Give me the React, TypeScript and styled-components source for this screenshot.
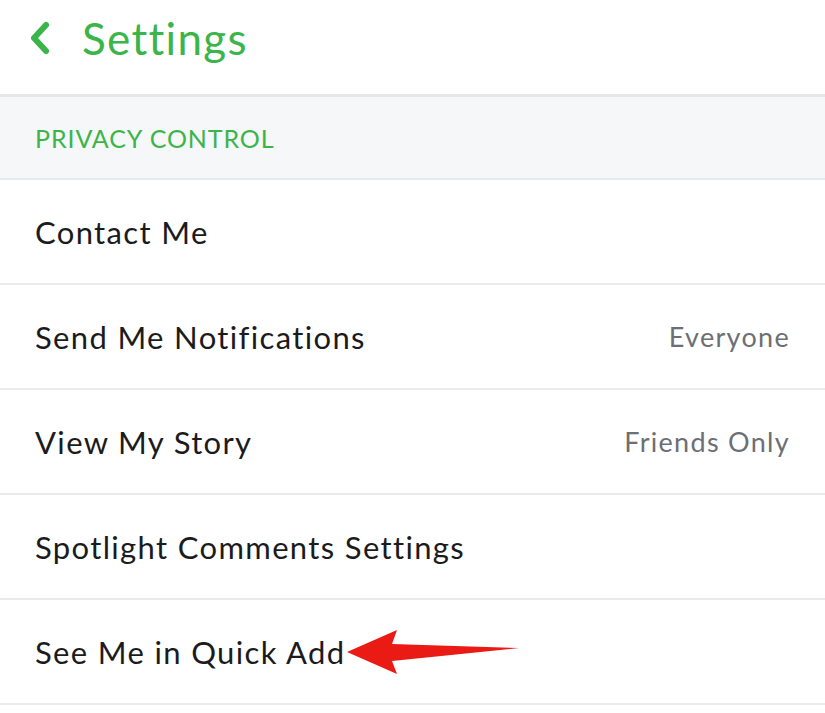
import React from "react"
import styled, { createGlobalStyle } from "styled-components"

const Global = createGlobalStyle`
  html, body { margin: 0; padding: 0; background: #fff; }
  body { font-family: Lato, "Noto Sans", sans-serif; }
`

const rows = [
  { label: "Contact Me", value: "" },
  { label: "Send Me Notifications", value: "Everyone" },
  { label: "View My Story", value: "Friends Only" },
  { label: "Spotlight Comments Settings", value: "" },
  { label: "See Me in Quick Add", value: "", arrow: true },
]

const Arrow = () => (
  <svg width="172" height="48" viewBox="0 0 172 48">
    <path d="M0 24 L50 2 L45 16 L172 20 L45 33 L50 46 Z" fill="#ea1a14" />
  </svg>
)

export default function App() {
  return (
    <S.Page>
      <Global />
      <S.Header>
        <S.Back viewBox="0 0 26 36" width="26" height="36">
          <path d="M19 5 L7 18 L19 31" fill="none" stroke="#3bb54a" strokeWidth="6" strokeLinecap="round" strokeLinejoin="round" />
        </S.Back>
        <S.Title>Settings</S.Title>
      </S.Header>
      <S.Section>PRIVACY CONTROL</S.Section>
      {rows.map((r) => (
        <S.Row key={r.label}>
          <S.Label>
            {r.label}
            {r.arrow && <S.ArrowWrap><Arrow /></S.ArrowWrap>}
          </S.Label>
          {r.value && <S.Value>{r.value}</S.Value>}
        </S.Row>
      ))}
    </S.Page>
  )
}

const S = {
  Page: styled.div`
    width: 825px;
    height: 713px;
    overflow: hidden;
    background: #fff;
  `,
  Header: styled.div`
    height: 97px;
    display: flex;
    align-items: center;
    padding-left: 27px;
    gap: 29px;
    border-bottom: 3px solid #e6e7e9;
    box-sizing: border-box;
    padding-bottom: 18px;
  `,
  Back: styled.svg`
    display: block;
  `,
  Title: styled.div`
    color: #3bb54a;
    font-size: 44px;
    letter-spacing: 1.3px;
  `,
  Section: styled.div`
    height: 83px;
    box-sizing: border-box;
    background: #f6f7f9;
    border-bottom: 2px solid #e8e9eb;
    color: #3bb54a;
    font-size: 25px;
    display: flex;
    align-items: center;
    padding-left: 35px;
    letter-spacing: 0.9px;
  `,
  Row: styled.div`
    height: 105px;
    box-sizing: border-box;
    border-bottom: 2px solid #eaebed;
    display: flex;
    align-items: center;
    justify-content: space-between;
    padding: 0 35px;
  `,
  Label: styled.div`
    color: #1b1b1d;
    font-size: 31px;
    display: flex;
    align-items: center;
    letter-spacing: 1.35px;
  `,
  Value: styled.div`
    color: #6c6f74;
    font-size: 27px;
    letter-spacing: 1.3px;
  `,
  ArrowWrap: styled.span`
    display: flex;
    margin-left: 2px;
  `,
}
